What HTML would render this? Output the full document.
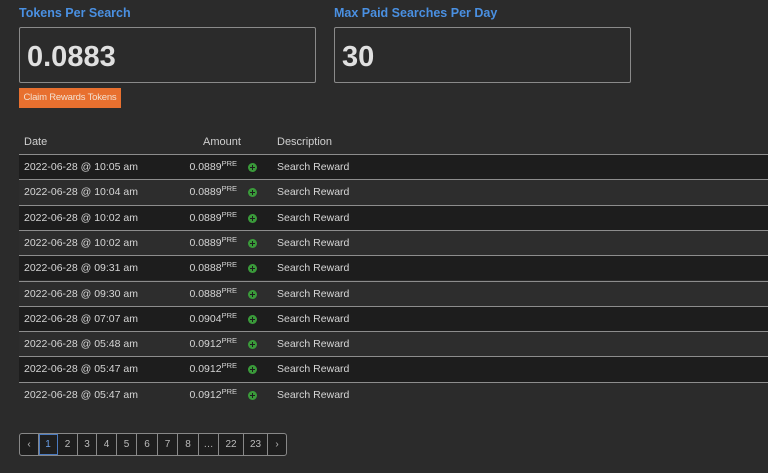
<!DOCTYPE html>
<html><head><style>
*{margin:0;padding:0;box-sizing:border-box}
body{width:768px;height:473px;background:#2b2b2b;font-family:"Liberation Sans",sans-serif;color:#d6d6d6;position:relative;overflow:hidden}
.lbl{position:absolute;top:6px;color:#4a90e2;font-size:12.5px;font-weight:bold}
.box{position:absolute;top:27px;height:56px;width:297px;border:1px solid #8a8a8a;border-radius:2px;font-size:29px;font-weight:bold;color:#e0e0e0;padding:13px 0 0 7px}
.btn{position:absolute;left:19px;top:88px;width:102px;height:20px;background:#e8702f;color:#f3e0d0;font-size:9.5px;line-height:20px;text-align:center;white-space:nowrap;letter-spacing:-0.2px}
.hd{position:absolute;top:136px;font-size:11px;color:#cfcfcf}
.row{position:absolute;left:19px;width:749px;height:25.3px;border-top:1.5px solid #8d8d8d;font-size:10.5px;line-height:24px}
.row span{position:absolute;line-height:24px}
.d{left:5px}.a{right:531px}.a sup{font-size:7.5px;vertical-align:0;position:relative;top:-4px;line-height:0}
.row .i{left:229px;top:8px;width:9px;height:9px;border-radius:50%;background:#3a9a3a}
.i:before{content:"";position:absolute;left:2px;top:4px;width:5px;height:1px;background:#1c1c1c}
.i:after{content:"";position:absolute;left:4px;top:2px;width:1px;height:5px;background:#1c1c1c}
.s{left:258px}
.pg{position:absolute;top:433px;left:19px;height:23px;border:1px solid #888;border-radius:3px;display:flex;background:#1e1e1e;overflow:hidden}
.pg div{height:21px;border-right:1px solid #888;font-size:10px;line-height:21px;text-align:center;color:#bbb}
.pg div:last-child{border-right:none}
</style></head><body>
<div class="lbl" style="left:19px">Tokens Per Search</div>
<div class="lbl" style="left:334px">Max Paid Searches Per Day</div>
<div class="box" style="left:19px">0.0883</div>
<div class="box" style="left:334px">30</div>
<div class="btn">Claim Rewards Tokens</div>
<div class="hd" style="left:24px">Date</div>
<div class="hd" style="left:203px">Amount</div>
<div class="hd" style="left:277px">Description</div>

<div class="row" style="top:154px;background:#1d1d1d"><span class="d">2022-06-28 @ 10:05 am</span><span class="a">0.0889<sup>PRE</sup></span><span class="i"></span><span class="s">Search Reward</span></div>
<div class="row" style="top:179.3px;background:#2d2d2d"><span class="d">2022-06-28 @ 10:04 am</span><span class="a">0.0889<sup>PRE</sup></span><span class="i"></span><span class="s">Search Reward</span></div>
<div class="row" style="top:204.6px;background:#1d1d1d"><span class="d">2022-06-28 @ 10:02 am</span><span class="a">0.0889<sup>PRE</sup></span><span class="i"></span><span class="s">Search Reward</span></div>
<div class="row" style="top:229.9px;background:#2d2d2d"><span class="d">2022-06-28 @ 10:02 am</span><span class="a">0.0889<sup>PRE</sup></span><span class="i"></span><span class="s">Search Reward</span></div>
<div class="row" style="top:255.2px;background:#1d1d1d"><span class="d">2022-06-28 @ 09:31 am</span><span class="a">0.0888<sup>PRE</sup></span><span class="i"></span><span class="s">Search Reward</span></div>
<div class="row" style="top:280.5px;background:#2d2d2d"><span class="d">2022-06-28 @ 09:30 am</span><span class="a">0.0888<sup>PRE</sup></span><span class="i"></span><span class="s">Search Reward</span></div>
<div class="row" style="top:305.8px;background:#1d1d1d"><span class="d">2022-06-28 @ 07:07 am</span><span class="a">0.0904<sup>PRE</sup></span><span class="i"></span><span class="s">Search Reward</span></div>
<div class="row" style="top:331.1px;background:#2d2d2d"><span class="d">2022-06-28 @ 05:48 am</span><span class="a">0.0912<sup>PRE</sup></span><span class="i"></span><span class="s">Search Reward</span></div>
<div class="row" style="top:356.4px;background:#1d1d1d"><span class="d">2022-06-28 @ 05:47 am</span><span class="a">0.0912<sup>PRE</sup></span><span class="i"></span><span class="s">Search Reward</span></div>
<div class="row" style="top:381.7px;background:#2b2b2b"><span class="d">2022-06-28 @ 05:47 am</span><span class="a">0.0912<sup>PRE</sup></span><span class="i"></span><span class="s">Search Reward</span></div>

<div class="pg">
<div style="width:19px">‹</div>
<div style="width:19px;color:#6aa0e8;outline:1px solid #4a7ac0;outline-offset:-1px">1</div>
<div style="width:20px">2</div><div style="width:19px">3</div><div style="width:20px">4</div><div style="width:20px">5</div><div style="width:21px">6</div><div style="width:20px">7</div><div style="width:21px">8</div><div style="width:20px">…</div><div style="width:25px">22</div><div style="width:24px">23</div><div style="width:18px">›</div>
</div>
</body></html>
